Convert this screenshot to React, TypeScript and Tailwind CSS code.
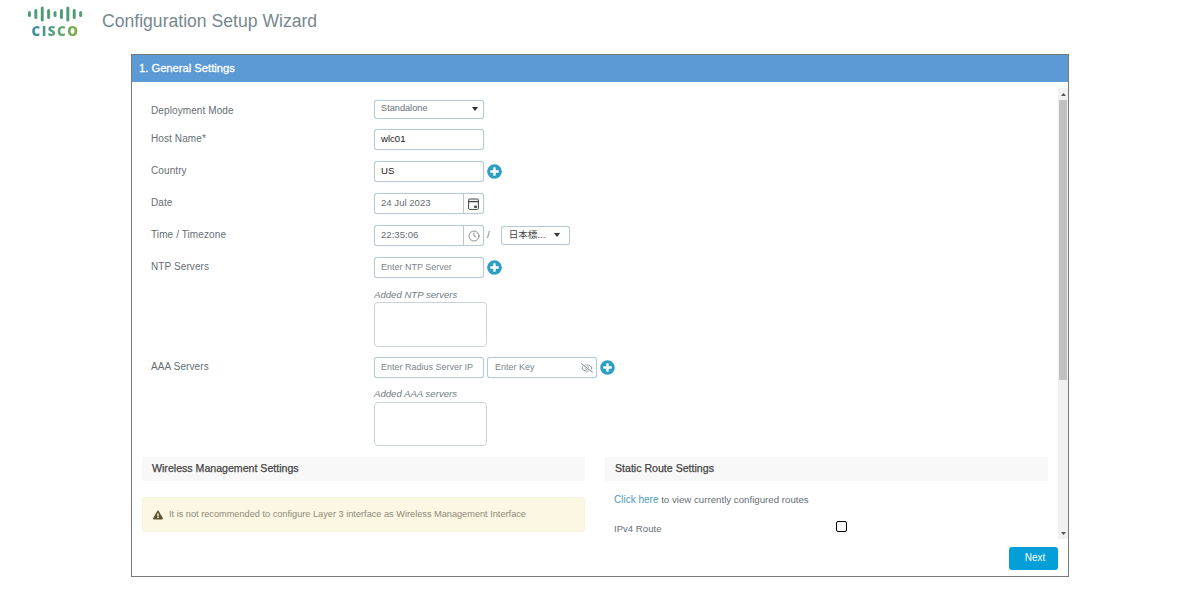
import { FaExclamationTriangle, FaPlusCircle, FaRegEyeSlash } from 'react-icons/fa';
import { Clock } from 'lucide-react';

const inputCls = 'h-[21px] border border-[#b7c9d3] rounded-[3px] bg-white flex items-center shadow-[0_0_1px_#b7c9d3]';

function Caret() {
  return (
    <svg width="6" height="4" viewBox="0 0 6 4" className="shrink-0">
      <path d="M0 0h6L3 4z" fill="#333" />
    </svg>
  );
}

function Plus() {
  return <FaPlusCircle className="ml-[3px] text-[#2e9fc4] text-[15px]" />;
}

function Logo() {
  const bars = [
    [0, 3],
    [6.4, 5],
    [12.8, 7.5],
    [19.2, 5],
    [25.6, 3],
    [32, 5],
    [38.4, 7.5],
    [44.8, 5],
    [51.2, 3],
  ];
  return (
    <div className="w-[55px] flex flex-col items-center">
      <svg width="55" height="16" viewBox="0 0 55 16">
        <defs>
          <linearGradient id="logoBars" x1="0" x2="1" y1="0" y2="0">
            <stop offset="0" stopColor="#3a8ea3" />
            <stop offset="0.6" stopColor="#4f9e7c" />
            <stop offset="1" stopColor="#7fb13b" />
          </linearGradient>
        </defs>
        {bars.map(([x, h]) => (
          <rect key={x} x={x} y={8 - h} width="3" height={h * 2} rx="1.5" fill="url(#logoBars)" />
        ))}
      </svg>
      <div className="mt-[2px] text-[13.5px] leading-[15px] font-['Open_Sans',sans-serif] font-extrabold tracking-[1.4px] bg-linear-to-r from-[#3a8ea3] to-[#7fb13b] bg-clip-text text-transparent">
        CISCO
      </div>
    </div>
  );
}

function Row({ label, className, labelClass = '', children }: { label: string; className: string; labelClass?: string; children: React.ReactNode }) {
  return (
    <div className={`flex ${className}`}>
      <div className={`w-[223px] shrink-0 h-[21px] pb-[2px] flex items-center text-[#666e73] text-[10px] tracking-[0.1px] ${labelClass}`}>{label}</div>
      <div className="flex items-center">{children}</div>
    </div>
  );
}

function AddedBox({ label, className, boxClass }: { label: string; className: string; boxClass: string }) {
  return (
    <div className={`ml-[223px] ${className}`}>
      <div className="italic text-[#6f7a80] text-[9.6px] leading-[12px]">{label}</div>
      <div className={`w-[113px] border border-[#c9d3d8] rounded-[4px] ${boxClass}`} />
    </div>
  );
}

export default function App() {
  return (
    <div className="w-[1200px] h-[601px] bg-white overflow-hidden font-['Liberation_Sans',sans-serif] text-[9.6px]">
      <header className="h-[54px] flex items-start pl-[28px] pt-[6px]">
        <Logo />
        <h1 className="ml-[19px] mt-[3px] text-[#75888f] text-[17.6px] leading-[24px]">Configuration Setup Wizard</h1>
      </header>

      <div className="ml-[131px] w-[938px] h-[523px] border border-[#77797b] flex flex-col">
        <div className="h-[27px] bg-[#5b9ad4] flex items-center pl-[7px] pb-[1px] text-white text-[11.2px] [-webkit-text-stroke:0.3px_white] shrink-0">
          1. General Settings
        </div>

        <div className="h-[461px] flex shrink-0 overflow-hidden">
          <div className="flex-1 pt-[18px] pl-[10px] overflow-hidden">
            <div className="pl-[9px]">
              <Row label="Deployment Mode" className="h-[19px]" labelClass="!pb-0">
                <div className={`${inputCls} !h-[19px] w-[110px] pl-[6px] pr-[5px] pb-[1px] justify-between text-[#666e73] text-[9.2px]`}>
                  Standalone
                  <Caret />
                </div>
              </Row>
              <Row label="Host Name*" className="mt-[10px]">
                <div className={`${inputCls} w-[110px] px-[6px] text-[#222]`}>wlc01</div>
              </Row>
              <Row label="Country" className="mt-[11px]">
                <div className={`${inputCls} w-[110px] px-[6px] text-[#222]`}>US</div>
                <Plus />
              </Row>
              <Row label="Date" className="mt-[11px]">
                <div className={`${inputCls} w-[110px] text-[#666e73]`}>
                  <span className="flex-1 px-[6px]">24 Jul 2023</span>
                  <span className="w-[20px] h-full border-l border-[#b7c9d3] flex items-center justify-center">
                    <svg width="11" height="12" viewBox="0 0 11 12" fill="none" stroke="#444">
                      <rect x="0.6" y="1" width="9.8" height="10.4" rx="1" />
                      <path d="M0.6 3.6h9.8" strokeWidth="1.4" />
                      <rect x="6.2" y="7.6" width="2.6" height="2.4" fill="#444" stroke="none" />
                    </svg>
                  </span>
                </div>
              </Row>
              <Row label="Time / Timezone" className="mt-[11px]">
                <div className={`${inputCls} w-[110px] text-[#666e73]`}>
                  <span className="flex-1 px-[6px]">22:35:06</span>
                  <span className="w-[20px] h-full border-l border-[#b7c9d3] flex items-center justify-center">
                    <Clock size={12} strokeWidth={1.3} color="#555" />
                  </span>
                </div>
                <span className="ml-[3px] text-[#666e73]">/</span>
                <div className={`${inputCls} !h-[19px] ml-[11px] w-[69px] pl-[7px] pr-[9px] pb-[1px] justify-between text-[#444] text-[9.6px] font-['Liberation_Sans','Noto_Sans_CJK_JP',sans-serif]`}>
                  日本標...
                  <Caret />
                </div>
              </Row>
              <Row label="NTP Servers" className="mt-[11px]">
                <div className={`${inputCls} w-[110px] px-[6px] text-[#7b858b] text-[9px]`}>Enter NTP Server</div>
                <Plus />
              </Row>
              <AddedBox label="Added NTP servers" className="mt-[11px]" boxClass="mt-[1px] h-[45px]" />
              <Row label="AAA Servers" className="mt-[10px]">
                <div className={`${inputCls} w-[110px] px-[6px] text-[#7b858b] text-[9px] whitespace-nowrap`}>Enter Radius Server IP</div>
                <div className={`${inputCls} ml-[3px] w-[110px] pl-[7px] pr-[3px] justify-between text-[#7b858b] text-[9px]`}>
                  Enter Key
                  <FaRegEyeSlash className="text-[#8b9499] text-[12px]" />
                </div>
                <Plus />
              </Row>
              <AddedBox label="Added AAA servers" className="mt-[10px]" boxClass="mt-[2px] h-[44px]" />
            </div>

            <div className="mt-[11px] flex gap-[20px]">
              <div className="w-[443px]">
                <div className="h-[24px] bg-[#f8f8f8] pl-[10px] flex items-center text-[#444] text-[10.6px] [-webkit-text-stroke:0.25px_#444]">
                  Wireless Management Settings
                </div>
                <div className="mt-[16px] h-[35px] bg-[#fcf7e3] border border-[#f8f2dc] rounded-[3px] flex items-center pl-[10px] text-[#8d8a78] text-[9.2px]">
                  <FaExclamationTriangle className="text-[#5d5230] text-[10px] mr-[6px]" />
                  It is not recommended to configure Layer 3 interface as Wireless Management Interface
                </div>
              </div>
              <div className="w-[443px]">
                <div className="h-[24px] bg-[#f8f8f8] pl-[10px] flex items-center text-[#444] text-[10.6px] [-webkit-text-stroke:0.25px_#444]">
                  Static Route Settings
                </div>
                <div className="mt-[13px] pl-[9px] text-[#666e73] text-[9.7px] leading-[12px]">
                  <a className="text-[#4f9bbd] text-[10px]">Click here</a> to view currently configured routes
                </div>
                <div className="mt-[15px] pl-[9px] flex items-start text-[#666e73]">
                  <span className="w-[222px] leading-[16px]">IPv4 Route</span>
                  <span className="w-[11px] h-[11px] border-[1.5px] border-black rounded-[2px]" />
                </div>
              </div>
            </div>
          </div>

          <div className="w-[10px] mt-[6px] mb-[4px] bg-[#f1f1f1] flex flex-col items-center shrink-0">
            <div className="h-[12px] flex items-center justify-center">
              <svg width="5" height="3" viewBox="0 0 5 3"><path d="M0 3h5L2.5 0z" fill="#555" /></svg>
            </div>
            <div className="w-[8px] h-[280px] bg-[#c1c1c1]" />
            <div className="flex-1" />
            <div className="h-[12px] flex items-center justify-center">
              <svg width="5" height="3" viewBox="0 0 5 3"><path d="M0 0h5L2.5 3z" fill="#555" /></svg>
            </div>
          </div>
        </div>

        <div className="flex-1 flex items-start justify-end pr-[10px] pt-[4px]">
          <button className="w-[49px] h-[23px] pl-[3px] pb-[3px] bg-[#049fd9] rounded-[3px] text-white text-[10px]">Next</button>
        </div>
      </div>
    </div>
  );
}
